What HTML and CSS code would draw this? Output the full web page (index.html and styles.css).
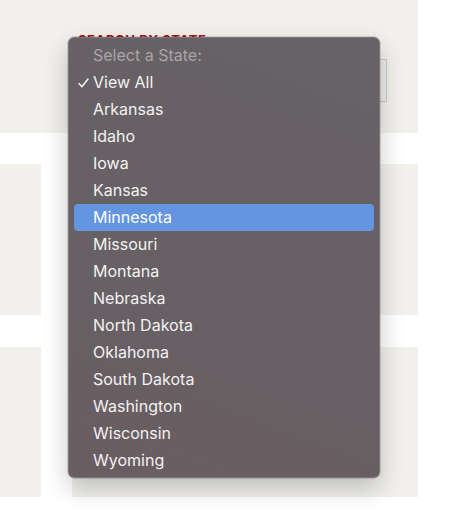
FILE: index.html
```html
<!DOCTYPE html>
<html>
<head>
<meta charset="utf-8">
<link rel="stylesheet" href="styles.css">
</head>
<body>
<div class="top">
  <div class="label">SEARCH BY STATE</div>
  <div class="input"></div>
</div>
<div class="row">
  <div class="side"></div>
  <div class="main"></div>
</div>
<div class="row row2">
  <div class="side"></div>
  <div class="main"></div>
</div>

<div class="menu">
  <div class="item header">Select a State:</div>
  <div class="item checked"><svg class="check" width="11" height="10" viewBox="0 0 11 10"><path d="M1 5.6 L3.9 8.8 L10 1" fill="none" stroke="#f2f0f1" stroke-width="1.5" stroke-linecap="round" stroke-linejoin="round"/></svg>View All</div>
  <div class="item">Arkansas</div>
  <div class="item">Idaho</div>
  <div class="item">Iowa</div>
  <div class="item">Kansas</div>
  <div class="item active">Minnesota</div>
  <div class="item">Missouri</div>
  <div class="item">Montana</div>
  <div class="item">Nebraska</div>
  <div class="item">North Dakota</div>
  <div class="item">Oklahoma</div>
  <div class="item">South Dakota</div>
  <div class="item">Washington</div>
  <div class="item">Wisconsin</div>
  <div class="item">Wyoming</div>
</div>
</body>
</html>
```
FILE: styles.css
```css
html, body {
  margin: 0;
  padding: 0;
  background: #ffffff;
  font-family: "Inter", "Liberation Sans", sans-serif;
}
.top {
  width: 418px;
  height: 133px;
  box-sizing: border-box;
  background: #f1f0ed;
  padding: 32px 0 0 78px;
}
.label {
  color: #b30d12;
  font-weight: 700;
  font-size: 13px;
  letter-spacing: 0.6px;
  line-height: 16px;
  height: 16px;
}
.input {
  margin-top: 11px;
  width: 309px;
  height: 43px;
  box-sizing: border-box;
  background: #ececec;
  border: 1px solid #c9c9c9;
}
.row {
  display: flex;
  gap: 31px;
  margin-top: 31px;
  height: 151px;
}
.row2 {
  margin-top: 32px;
  height: 150px;
}
.side {
  width: 41px;
  background: #f1f0ed;
}
.main {
  width: 346px;
  background: #f1f0ed;
}
.menu {
  position: absolute;
  left: 68px;
  top: 37px;
  width: 312px;
  height: 441px;
  box-sizing: border-box;
  padding: 4px 5px;
  border-radius: 6px;
  background: linear-gradient(20deg, #6a5d61 0%, #676064 35%, #676266 100%);
  border: 1px solid #7b7679;
  box-shadow: 0 10px 24px rgba(0,0,0,0.22), 0 0 0 0.5px rgba(0,0,0,0.25);
}
.item {
  position: relative;
  height: 27px;
  line-height: 27px;
  padding-left: 19px;
  font-size: 16px;
  color: #f3f1f2;
  border-radius: 4px;
}
.header {
  color: #a9a4a7;
}
.check {
  position: absolute;
  left: 4px;
  top: 9px;
}
.active {
  background: #6495e0;
  color: #ffffff;
}
```
